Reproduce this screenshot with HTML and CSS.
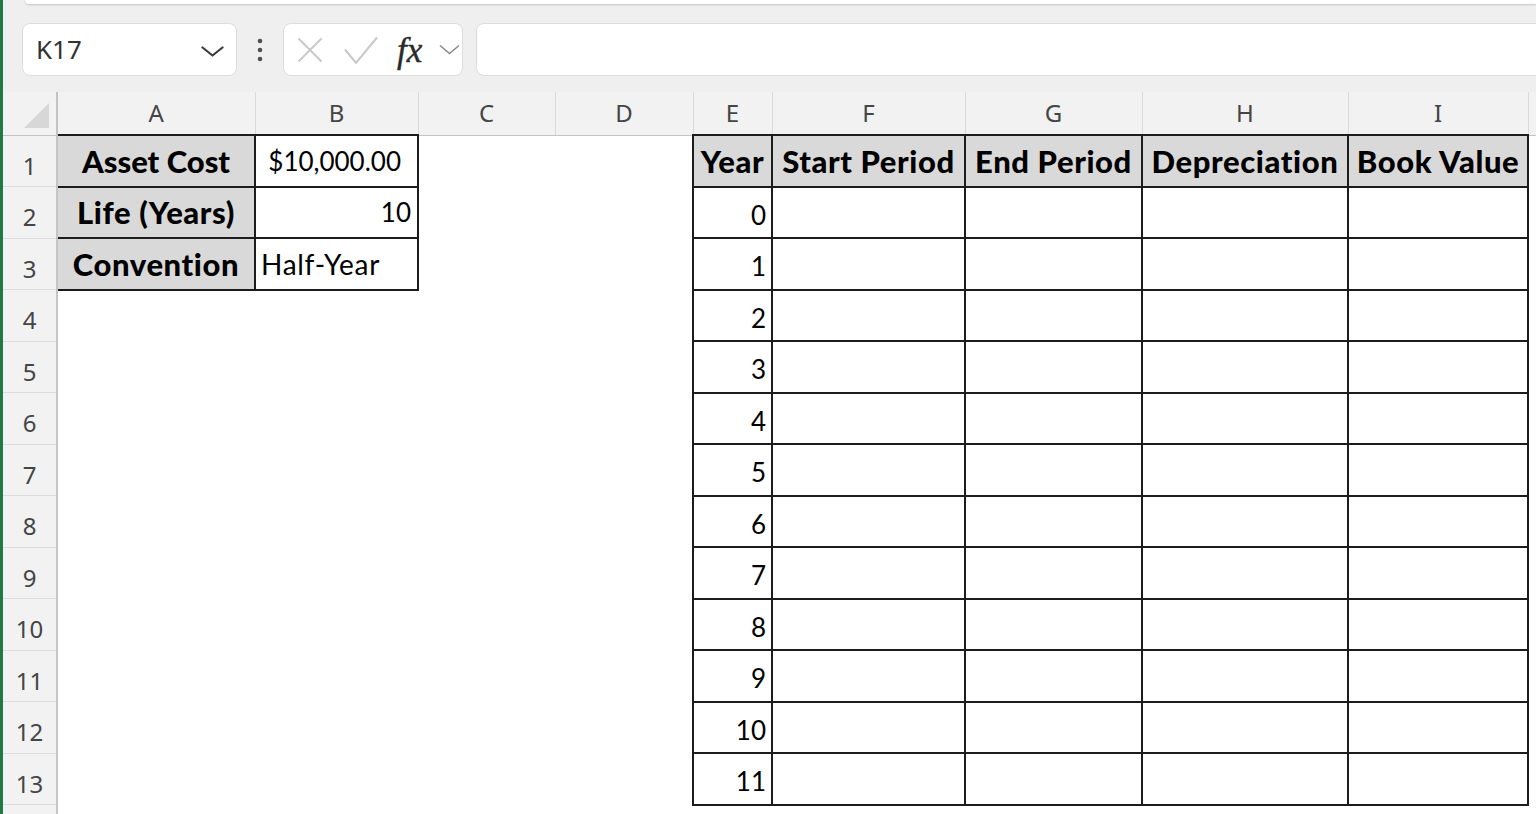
FILE: index.html
```html
<!DOCTYPE html>
<html>
<head>
<meta charset="utf-8">
<title>Depreciation schedule</title>
<link rel="stylesheet" href="styles.css">
</head>
<body>
<div class="app">
  <div class="top">
    <div class="ribbon-edge"></div>
    <div class="fbar">
      <div class="namebox">
        <span class="ref">K17</span>
        <svg class="chev" width="23" height="11" viewBox="0 0 23 11"><polyline points="1.5,1.5 11.5,9.5 21.5,1.5" fill="none" stroke="#3c3c3c" stroke-width="2.2" stroke-linecap="round" stroke-linejoin="round"/></svg>
      </div>
      <div class="dots">
        <svg width="6" height="24" viewBox="0 0 6 24"><circle cx="3" cy="3" r="2.3" fill="#505050"/><circle cx="3" cy="12" r="2.3" fill="#505050"/><circle cx="3" cy="21" r="2.3" fill="#505050"/></svg>
      </div>
      <div class="fxbox">
        <svg class="ic-x" width="26" height="26" viewBox="0 0 26 26"><path d="M1.5 1.5 L24.5 24.5 M24.5 1.5 L1.5 24.5" stroke="#c9c9c9" stroke-width="2" fill="none"/></svg>
        <svg class="ic-ok" width="34" height="30" viewBox="0 0 34 30"><polyline points="1,13.5 12,27 33,1.5" fill="none" stroke="#c9c9c9" stroke-width="2"/></svg>
        <span class="fx">fx</span>
        <svg class="chev-s" width="21" height="11" viewBox="0 0 21 11"><polyline points="1,1.5 10.5,9.5 20,1.5" fill="none" stroke="#8a8a8a" stroke-width="1.6"/></svg>
      </div>
      <div class="formula"></div>
    </div>
  </div>

  <table class="sheet">
    <colgroup>
      <col class="c-rh"><col class="c-a"><col class="c-b"><col class="c-c"><col class="c-d"><col class="c-e"><col class="c-f"><col class="c-g"><col class="c-h"><col class="c-i"><col class="c-j">
    </colgroup>
    <tr class="hdr">
      <th class="corner"><svg width="25" height="25" viewBox="0 0 25 25"><polygon points="25,0 25,25 0,25" fill="#d7d7d7"/></svg></th>
      <th class="ch">A</th><th class="ch">B</th><th class="ch">C</th><th class="ch">D</th><th class="ch">E</th><th class="ch">F</th><th class="ch">G</th><th class="ch">H</th><th class="ch">I</th><th class="ch"></th>
    </tr>
    <tr class="r">
      <th class="rh">1</th>
      <td class="lbl tight">Asset Cost</td><td class="val cur">$10,000.00</td><td></td><td></td>
      <td class="hd">Year</td><td class="hd">Start Period</td><td class="hd">End Period</td><td class="hd">Depreciation</td><td class="hd">Book Value</td><td></td>
    </tr>
    <tr class="r">
      <th class="rh">2</th>
      <td class="lbl">Life (Years)</td><td class="val num">10</td><td></td><td></td>
      <td class="yr">0</td><td class="d"></td><td class="d"></td><td class="d"></td><td class="d"></td><td></td>
    </tr>
    <tr class="r">
      <th class="rh">3</th>
      <td class="lbl">Convention</td><td class="val txt">Half-Year</td><td></td><td></td>
      <td class="yr">1</td><td class="d"></td><td class="d"></td><td class="d"></td><td class="d"></td><td></td>
    </tr>
    <tr class="r">
      <th class="rh">4</th><td></td><td></td><td></td><td></td>
      <td class="yr">2</td><td class="d"></td><td class="d"></td><td class="d"></td><td class="d"></td><td></td>
    </tr>
    <tr class="r">
      <th class="rh">5</th><td></td><td></td><td></td><td></td>
      <td class="yr">3</td><td class="d"></td><td class="d"></td><td class="d"></td><td class="d"></td><td></td>
    </tr>
    <tr class="r">
      <th class="rh">6</th><td></td><td></td><td></td><td></td>
      <td class="yr">4</td><td class="d"></td><td class="d"></td><td class="d"></td><td class="d"></td><td></td>
    </tr>
    <tr class="r">
      <th class="rh">7</th><td></td><td></td><td></td><td></td>
      <td class="yr">5</td><td class="d"></td><td class="d"></td><td class="d"></td><td class="d"></td><td></td>
    </tr>
    <tr class="r">
      <th class="rh">8</th><td></td><td></td><td></td><td></td>
      <td class="yr">6</td><td class="d"></td><td class="d"></td><td class="d"></td><td class="d"></td><td></td>
    </tr>
    <tr class="r">
      <th class="rh">9</th><td></td><td></td><td></td><td></td>
      <td class="yr">7</td><td class="d"></td><td class="d"></td><td class="d"></td><td class="d"></td><td></td>
    </tr>
    <tr class="r">
      <th class="rh">10</th><td></td><td></td><td></td><td></td>
      <td class="yr">8</td><td class="d"></td><td class="d"></td><td class="d"></td><td class="d"></td><td></td>
    </tr>
    <tr class="r">
      <th class="rh">11</th><td></td><td></td><td></td><td></td>
      <td class="yr">9</td><td class="d"></td><td class="d"></td><td class="d"></td><td class="d"></td><td></td>
    </tr>
    <tr class="r">
      <th class="rh">12</th><td></td><td></td><td></td><td></td>
      <td class="yr">10</td><td class="d"></td><td class="d"></td><td class="d"></td><td class="d"></td><td></td>
    </tr>
    <tr class="r">
      <th class="rh">13</th><td></td><td></td><td></td><td></td>
      <td class="yr">11</td><td class="d"></td><td class="d"></td><td class="d"></td><td class="d"></td><td></td>
    </tr>
    <tr class="r">
      <th class="rh"></th><td></td><td></td><td></td><td></td><td></td><td></td><td></td><td></td><td></td><td></td>
    </tr>
  </table>
</div>
</body>
</html>
```

FILE: styles.css
```css
html, body {
  margin: 0;
  padding: 0;
  background: #ffffff;
}

body {
  overflow: hidden;
  height: 814px;
}

.app {
  border-left: 3px solid #1f7a44;
  height: 814px;
  overflow: hidden;
  background: #ffffff;
}

/* ---------- formula bar ---------- */
.top {
  background: #efefef;
  height: 92px;
  overflow: hidden;
}

.ribbon-edge {
  height: 4px;
  margin-left: 22px;
  background: #ffffff;
  border-bottom-left-radius: 6px;
  box-shadow: 0 1px 2px rgba(0, 0, 0, 0.18);
}

.fbar {
  display: flex;
  align-items: center;
  height: 53px;
  margin-top: 19px;
}

.namebox {
  margin-left: 19px;
  width: 215px;
  height: 53px;
  box-sizing: border-box;
  background: #ffffff;
  border: 1px solid #dddddd;
  border-radius: 8px;
  display: flex;
  align-items: center;
  justify-content: space-between;
  padding: 0 12px 0 13px;
  flex: none;
}

.ref {
  font-family: "Noto Sans", "Open Sans", sans-serif;
  font-size: 26px;
  color: #333333;
  line-height: 1;
  margin-top: -2px;
}

.chev {
  display: block;
  margin-top: 3px;
}

.dots {
  width: 46px;
  flex: none;
  display: flex;
  justify-content: center;
}

.dots svg {
  display: block;
}

.fxbox {
  width: 180px;
  height: 53px;
  box-sizing: border-box;
  background: #ffffff;
  border: 1px solid #dddddd;
  border-radius: 8px;
  display: flex;
  align-items: center;
  padding-left: 13px;
  flex: none;
}

.ic-x {
  display: block;
  margin-right: 21px;
}

.ic-ok {
  display: block;
  margin-right: 19px;
  margin-top: 2px;
}

.fx {
  font-family: "Liberation Serif", "DejaVu Serif", serif;
  font-style: italic;
  font-size: 35px;
  line-height: 1;
  color: #2a2a2a;
  width: 31px;
  margin-right: 11px;
  margin-top: 2px;
  -webkit-text-stroke: 0.4px #2a2a2a;
}

.chev-s {
  display: block;
}

.formula {
  flex: 1;
  height: 53px;
  box-sizing: border-box;
  margin-left: 13px;
  margin-right: -20px;
  background: #ffffff;
  border: 1px solid #dddddd;
  border-radius: 8px;
}

/* ---------- sheet ---------- */
.sheet {
  table-layout: fixed;
  border-collapse: collapse;
  width: 1645px;
}

.c-rh { width: 54px; }
.c-a { width: 198px; }
.c-b { width: 163px; }
.c-c { width: 137px; }
.c-d { width: 138px; }
.c-e { width: 79px; }
.c-f { width: 193px; }
.c-g { width: 177px; }
.c-h { width: 206px; }
.c-i { width: 180px; }
.c-j { width: 120px; }

.hdr {
  height: 43px;
}

.r {
  height: 51.5px;
}

.sheet th,
.sheet td {
  padding: 0;
  white-space: nowrap;
  overflow: hidden;
}

.corner {
  background: #f2f2f2;
  border-right: 2px solid #c4c4c4;
  border-bottom: 1px solid #c4c4c4;
  vertical-align: bottom;
  padding: 0 7px 7px 0 !important;
}

.corner svg {
  display: block;
  margin-left: auto;
}

.ch {
  background: #f2f2f2;
  border-right: 1px solid #dadada;
  border-bottom: 1px solid #c4c4c4;
  font-family: "Noto Sans", "Open Sans", sans-serif;
  font-weight: normal;
  font-size: 24px;
  color: #454545;
  text-align: center;
  vertical-align: middle;
  padding-bottom: 2px !important;
}

.rh {
  background: #f2f2f2;
  border-right: 2px solid #c4c4c4;
  border-bottom: 1px solid #dcdcdc;
  font-family: "Noto Sans", "Open Sans", sans-serif;
  font-weight: normal;
  font-size: 24px;
  color: #454545;
  text-align: center;
  vertical-align: middle;
  padding-top: 9px !important;
}

.sheet td {
  font-family: Lato, "Open Sans", sans-serif;
  color: #000000;
  vertical-align: middle;
}

.lbl,
.hd {
  background: #d9d9d9;
  font-weight: 900;
  font-size: 31px;
  letter-spacing: 0.6px;
  text-align: center;
  border: 2px solid #1c1c1c;
}

.lbl {
  border-left: none;
}

.tight {
  letter-spacing: 0;
}

.val {
  background: #ffffff;
  border: 2px solid #1c1c1c;
  font-size: 26px;
}

.cur {
  text-align: right;
  padding-right: 16px !important;
}

.num {
  text-align: right;
  padding-right: 6px !important;
}

.txt {
  text-align: left;
  padding-left: 5px !important;
  font-size: 28px;
  letter-spacing: 0.7px;
}

.yr {
  border: 2px solid #1c1c1c;
  font-size: 26px;
  text-align: right;
  padding-right: 5px !important;
  padding-top: 5px !important;
}

.d {
  border: 2px solid #1c1c1c;
}
```
